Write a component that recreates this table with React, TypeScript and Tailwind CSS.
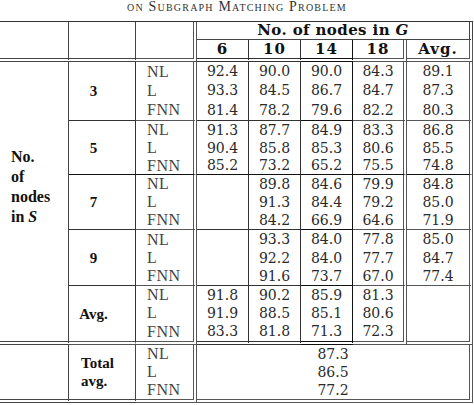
import { Fragment } from "react";

const groups = [
  {
    label: "3",
    rows: [
      ["92.4", "90.0", "90.0", "84.3", "89.1"],
      ["93.3", "84.5", "86.7", "84.7", "87.3"],
      ["81.4", "78.2", "79.6", "82.2", "80.3"],
    ],
  },
  {
    label: "5",
    rows: [
      ["91.3", "87.7", "84.9", "83.3", "86.8"],
      ["90.4", "85.8", "85.3", "80.6", "85.5"],
      ["85.2", "73.2", "65.2", "75.5", "74.8"],
    ],
  },
  {
    label: "7",
    rows: [
      ["", "89.8", "84.6", "79.9", "84.8"],
      ["", "91.3", "84.4", "79.2", "85.0"],
      ["", "84.2", "66.9", "64.6", "71.9"],
    ],
  },
  {
    label: "9",
    rows: [
      ["", "93.3", "84.0", "77.8", "85.0"],
      ["", "92.2", "84.0", "77.7", "84.7"],
      ["", "91.6", "73.7", "67.0", "77.4"],
    ],
  },
  {
    label: "Avg.",
    rows: [
      ["91.8", "90.2", "85.9", "81.3", ""],
      ["91.9", "88.5", "85.1", "80.6", ""],
      ["83.3", "81.8", "71.3", "72.3", ""],
    ],
  },
];

const methods = ["NL", "L", "FNN"];
const totals = ["87.3", "86.5", "77.2"];

// right borders of the five number columns
const numRight = [
  "border-r border-[#333]",
  "border-r border-[#333]",
  "border-r border-[#111]",
  "border-r-4 border-double border-[#555]",
  "border-r-4 border-double border-[#555]",
];

const num = "flex items-center justify-center font-['DejaVu_Serif',serif] text-[14px] text-[#2a2a2a]";
const method = "flex items-center pl-[11px] font-['Liberation_Serif',serif] text-[16px] tracking-[0.5px] text-[#444] border-r-4 border-double border-[#555]";
const boldLabel = "flex items-center justify-center pr-[17px] font-['Liberation_Serif',serif] font-bold text-[15px] leading-[18px] text-[#111]";
const head = "font-['DejaVu_Serif',serif] font-bold text-[15px] text-[#111]";

export default function App() {
  return (
    <div className="w-[474px] h-[405px] bg-white overflow-hidden">
      <div className="h-[21px] pt-[1px] text-center font-['Liberation_Serif',serif] text-[14px] leading-[12px] tracking-[1.2px] [font-variant:small-caps] text-[#333]">
        on Subgraph Matching Problem
      </div>

      <div className="grid w-[473px] border-t border-[#333] grid-cols-[69px_67px_61px_52px_52px_52px_54px_66px] grid-rows-[18px_22px_19px_19px_21px_18px_18px_18px_18px_18px_19px_19px_18px_19px_18px_18px_23px_18px_18px_22px]">
        {/* header */}
        <div className="row-span-2 border-r border-b-4 border-double border-[#444]" />
        <div className="row-span-2 border-r border-b-4 border-double border-[#444]" />
        <div className="row-span-2 border-r-4 border-b-4 border-double border-[#555]" />
        <div className={`col-span-5 flex items-center justify-center border-b border-r-4 border-double border-[#444] tracking-[0.4px] ${head}`}>
          No. of nodes in&nbsp;<span className="italic">G</span>
        </div>
        {["6", "10", "14", "18", "Avg."].map((h, i) => (
          <div
            key={h}
            className={`flex items-center justify-center tracking-[1px] ${head} border-b-4 border-double ${numRight[i]}`}
          >
            {h}
          </div>
        ))}

        {/* body */}
        {groups.map((g, gi) => {
          const lastGroup = gi === groups.length - 1;
          return g.rows.map((r, ri) => {
            const lastRow = ri === 2;
            const bottom = lastRow
              ? lastGroup
                ? "border-b-4 border-double"
                : gi === 1
                ? "border-b border-b-[#111]"
                : "border-b"
              : "";
            return [
              gi === 0 && ri === 0 ? (
                <div
                  key={`s${gi}`}
                  className="row-span-15 border-r border-b-4 border-double border-[#444] pt-[85px] pl-[11px] font-['Liberation_Serif',serif] font-bold text-[16px] leading-[20px] text-[#111]"
                >
                  No.
                  <br />
                  of
                  <br />
                  nodes
                  <br />
                  in <span className="italic">S</span>
                </div>
              ) : null,
              ri === 0 ? (
                <div
                  key={`l${gi}`}
                  className={`row-span-3 border-r border-[#333] ${lastGroup ? "border-b-4 border-double border-b-[#555]" : gi === 1 ? "border-b border-b-[#111]" : "border-b"} ${boldLabel}`}
                >
                  {g.label}
                </div>
              ) : null,
              <div key={`m${gi}${ri}`} className={`${method} ${bottom}`}>
                {methods[ri]}
              </div>,
              ...r.map((v, ci) => (
                <div key={`v${gi}${ri}${ci}`} className={`${num} ${numRight[ci]} ${bottom}`}>
                  {v}
                </div>
              )),
            ];
          });
        })}

        {/* total average */}
        <div className="row-span-3 border-r border-b-4 border-double border-[#444]" />
        <div className={`row-span-3 border-r border-b-4 border-double border-[#444] ${boldLabel}`}>
          <div className="text-left pl-[8px]">
            Total
            <br />
            avg.
          </div>
        </div>
        {totals.map((t, i) => (
          <Fragment key={t}>
            <div className={`${method} ${i === 2 ? "border-b-4" : ""}`}>{methods[i]}</div>
            <div className={`col-span-5 ${num} border-r-4 border-double border-[#555] ${i === 2 ? "border-b-4" : ""}`}>
              {t}
            </div>
          </Fragment>
        ))}
      </div>
    </div>
  );
}
